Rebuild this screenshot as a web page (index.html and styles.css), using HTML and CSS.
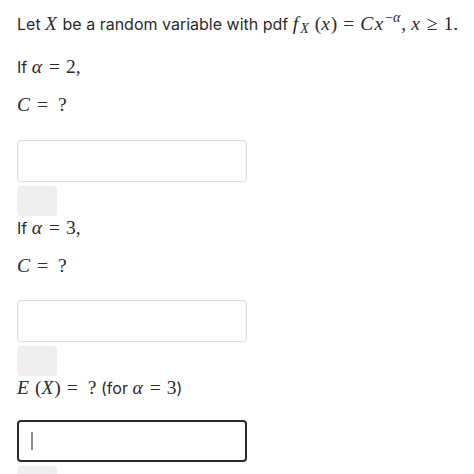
FILE: index.html
```html
<!DOCTYPE html>
<html>
<head>
<meta charset="utf-8">
<link rel="stylesheet" href="styles.css">
</head>
<body>
<p class="row intro">Let <span class="m"><i>X</i></span> be a random variable with pdf <span class="m"><i>f</i><sub class="sb"><i>X</i></sub><span class="gap"></span>(<i>x</i>)<span class="rel">=</span><i>C</i><i>x</i><sup class="sp">−<i>α</i></sup>,<span class="thin"></span><i>x</i><span class="rel">≥</span>1.</span></p>

<p class="row cond first">If <span class="m"><i>α</i><span class="rel">=</span>2,</span></p>
<p class="row ask">
  <span class="m"><i>C</i><span class="rel">=</span><span class="q">?</span></span>
</p>
<div class="field first"></div>
<div class="btn"></div>

<p class="row cond">If <span class="m"><i>α</i><span class="rel">=</span>3,</span></p>
<p class="row ask">
  <span class="m"><i>C</i><span class="rel">=</span><span class="q">?</span></span>
</p>
<div class="field"></div>
<div class="btn"></div>

<p class="row cond">
  <span class="m"><i>E</i><span class="gap"></span>(<i>X</i>)<span class="rel">=</span><span class="q">?</span></span> (for <span class="m"><i>α</i><span class="rel">=</span>3</span>)
</p>
<div class="field focused"><span class="caret"></span></div>
<div class="btn"></div>
</body>
</html>
```

FILE: styles.css
```css
html, body {
  margin: 0;
  background: #ffffff;
}
body {
  padding: 12px 17px 0;
  font-family: Inter, "Noto Sans", sans-serif;
  font-size: 16px;
  color: #2b2b2b;
}
.row {
  margin: 0;
  height: 24px;
  line-height: 24px;
  white-space: nowrap;
}
.cond.first {
  margin-top: 19px;
}
.ask {
  margin-top: 14px;
}
.m {
  font-family: "Liberation Serif", "DejaVu Serif", serif;
  font-size: 19.5px;
  line-height: 0;
}
.m i {
  font-style: italic;
  margin-right: 1px;
}
.rel {
  margin: 0 6px;
}
.q {
  margin-left: 4px;
}
.gap {
  display: inline-block;
  width: 5px;
}
.thin {
  display: inline-block;
  width: 5px;
}
.sb {
  font-size: 14px;
  line-height: 0;
  vertical-align: -3px;
  margin-left: 1px;
}
.sp {
  font-size: 14px;
  line-height: 0;
  vertical-align: 8px;
  margin-left: 1px;
}
.field {
  box-sizing: border-box;
  width: 230px;
  height: 42px;
  margin-top: 22px;
  border: 1px solid #dcdcdc;
  border-radius: 4px;
  background: #ffffff;
}
.field.first {
  margin-top: 23px;
}
.field.focused {
  margin-top: 20px;
  border: 2px solid #2a2a2a;
  display: flex;
  align-items: center;
  padding-left: 12px;
}
.caret {
  width: 2px;
  height: 18px;
  background: #8a8a8a;
}
.btn {
  width: 40px;
  height: 30px;
  margin-top: 4px;
  border-radius: 4px;
  background: #efefef;
}
```
